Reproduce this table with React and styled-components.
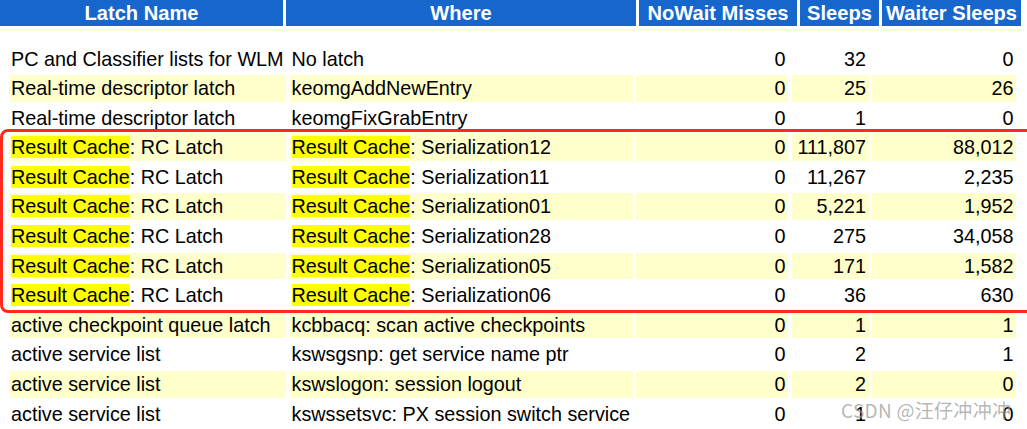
import React from 'react'
import styled, { createGlobalStyle } from 'styled-components'

const GlobalStyle = createGlobalStyle`
  html, body {
    margin: 0;
    padding: 0;
    background: #fff;
    overflow: hidden;
  }
  body {
    font-family: "Liberation Sans", Arial, sans-serif;
    color: #000;
  }
`

const Page = styled.div`
  position: relative;
  width: 1027px;
  height: 429px;
  overflow: hidden;
`

const HeadGrid = styled.div`
  display: grid;
  grid-template-columns: 283px 350px 158px 79px 139px;
  column-gap: 3px;
  row-gap: 3px;
  width: 1021px;
`

const HeadCell = styled.div`
  height: 26px;
  background: #1766cb;
  color: #fff;
  font-weight: bold;
  font-size: 20.1px;
  display: flex;
  align-items: center;
  justify-content: center;
  white-space: nowrap;
`

const Strip = styled.div`
  height: 2px;
  background: #ffffcc;
`

const Body = styled.div`
  display: flex;
  flex-direction: column;
  gap: 3px;
  margin-top: 14.5px;
  padding-left: 9px;
`

const Row = styled.div`
  display: grid;
  grid-template-columns: 277px 343px 152px 77px 144px;
  column-gap: 3.5px;
  height: 26.6px;
`

const Cell = styled.div`
  background: ${(p) => (p.$shaded ? '#ffffcc' : 'transparent')};
  font-size: 19.8px;
  line-height: 26.6px;
  white-space: nowrap;
  padding: ${(p) => (p.$num ? '0 2.5px 0 0' : '0 0 0 2px')};
  text-align: ${(p) => (p.$num ? 'right' : 'left')};
  overflow: visible;
`

const Mark = styled.span`
  background: #ffff00;
`

const Group = styled.div`
  position: relative;
  display: flex;
  flex-direction: column;
  gap: 3px;

  &::after {
    content: '';
    position: absolute;
    top: -5.5px;
    bottom: -4px;
    left: -9px;
    right: -11px;
    border: 3px solid #ff2a1c;
    border-radius: 8px;
    pointer-events: none;
  }
`

const Watermark = styled.div`
  position: absolute;
  left: 841px;
  top: 396px;
  font-family: "Noto Sans CJK SC", "Liberation Sans", sans-serif;
  font-size: 19px;
  color: rgba(150, 150, 150, 0.7);
  letter-spacing: 0.3px;
  white-space: nowrap;
`

const headers = ['Latch Name', 'Where', 'NoWait Misses', 'Sleeps', 'Waiter Sleeps']

const topRows = [
  ['PC and Classifier lists for WLM', 'No latch', '0', '32', '0'],
  ['Real-time descriptor latch', 'keomgAddNewEntry', '0', '25', '26'],
  ['Real-time descriptor latch', 'keomgFixGrabEntry', '0', '1', '0'],
]

const rcRows = [
  ['Serialization12', '0', '111,807', '88,012'],
  ['Serialization11', '0', '11,267', '2,235'],
  ['Serialization01', '0', '5,221', '1,952'],
  ['Serialization28', '0', '275', '34,058'],
  ['Serialization05', '0', '171', '1,582'],
  ['Serialization06', '0', '36', '630'],
]

const bottomRows = [
  ['active checkpoint queue latch', 'kcbbacq: scan active checkpoints', '0', '1', '1'],
  ['active service list', 'kswsgsnp: get service name ptr', '0', '2', '1'],
  ['active service list', 'kswslogon: session logout', '0', '2', '0'],
  ['active service list', 'kswssetsvc: PX session switch service', '0', '1', '0'],
]

function DataRow({ cells, shaded }) {
  return (
    <Row>
      {cells.map((c, i) => (
        <Cell key={i} $shaded={shaded} $num={i >= 2}>
          {c}
        </Cell>
      ))}
    </Row>
  )
}

export default function App() {
  return (
    <Page>
      <GlobalStyle />
      <HeadGrid>
        {headers.map((h) => (
          <HeadCell key={h}>{h}</HeadCell>
        ))}
        {headers.map((h) => (
          <Strip key={h + '-s'} />
        ))}
      </HeadGrid>

      <Body>
        {topRows.map((r, i) => (
          <DataRow key={i} cells={r} shaded={i % 2 === 1} />
        ))}
        <Group>
          {rcRows.map((r, i) => (
            <DataRow
              key={r[0]}
              shaded={i % 2 === 0}
              cells={[
                <><Mark>Result Cache</Mark>: RC Latch</>,
                <><Mark>Result Cache</Mark>: {r[0]}</>,
                r[1],
                r[2],
                r[3],
              ]}
            />
          ))}
        </Group>
        {bottomRows.map((r, i) => (
          <DataRow key={i} cells={r} shaded={i % 2 === 0} />
        ))}
      </Body>

      <Watermark>CSDN @汪仔冲冲冲</Watermark>
    </Page>
  )
}
